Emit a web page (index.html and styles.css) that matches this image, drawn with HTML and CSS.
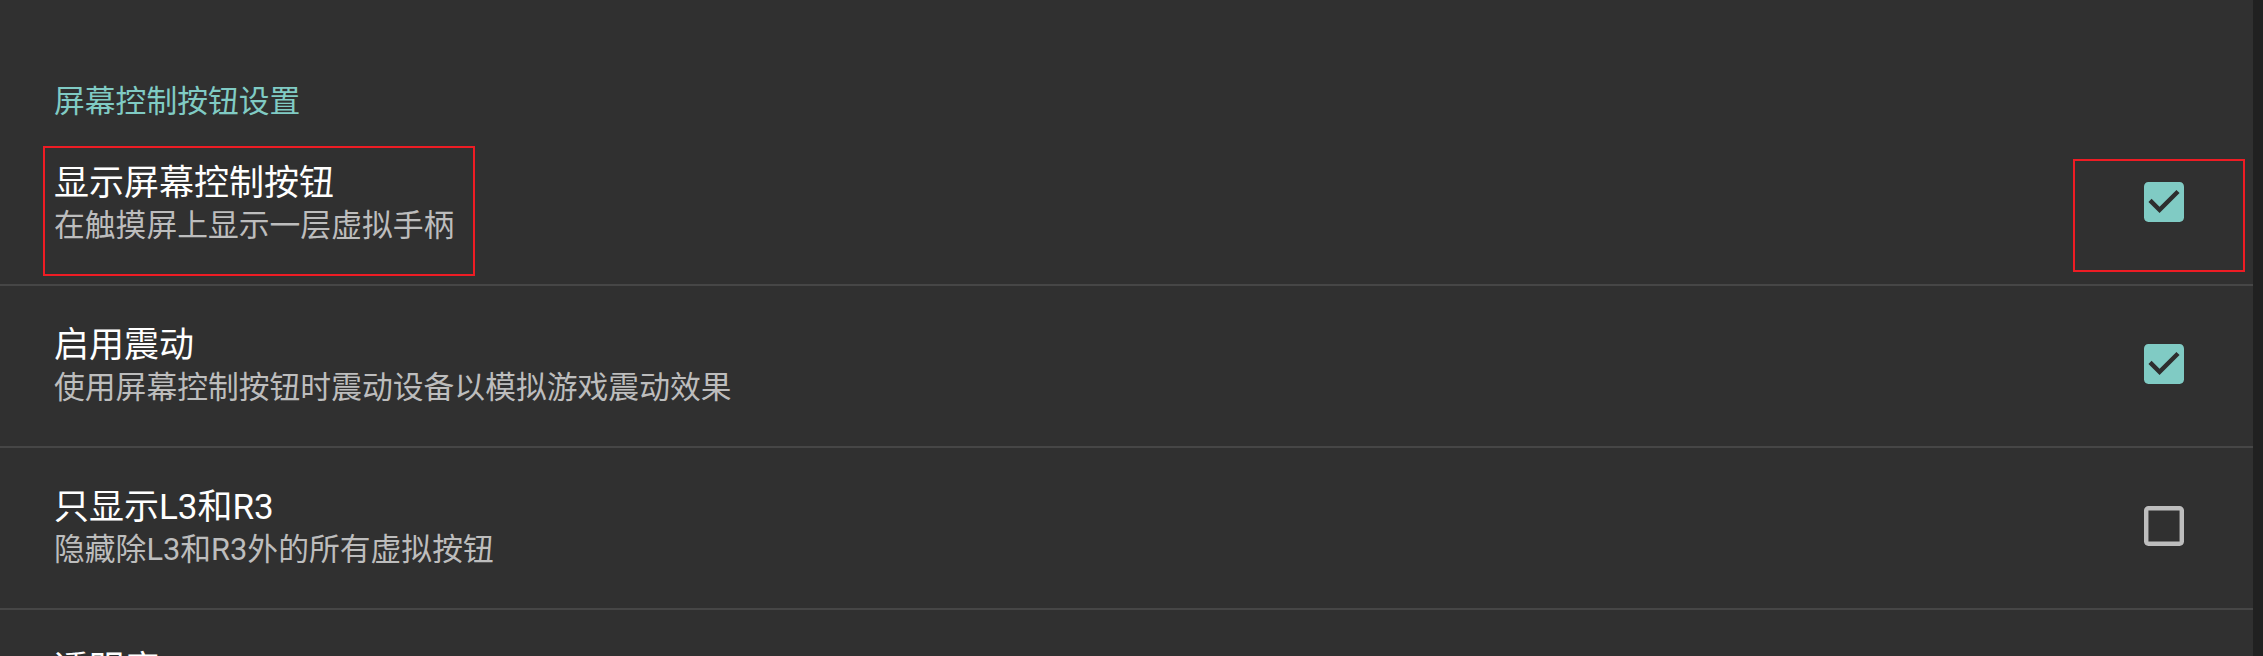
FILE: index.html
```html
<!DOCTYPE html>
<html lang="zh-CN">
<head>
<meta charset="utf-8">
<title>屏幕控制按钮设置</title>
<link rel="stylesheet" href="styles.css">
</head>
<body>
<div class="screen">
  <main class="prefs">
    <div class="category">屏幕控制按钮设置</div>

    <div class="row">
      <div class="texts">
        <div class="title">显示屏幕控制按钮</div>
        <div class="summary">在触摸屏上显示一层虚拟手柄</div>
      </div>
      <svg class="check" viewBox="3 3 18 18" aria-hidden="true">
        <path class="box-on" d="M19 3H5c-1.11 0-2 .9-2 2v14c0 1.1.89 2 2 2h14c1.11 0 2-.9 2-2V5c0-1.1-.89-2-2-2z"/>
        <path class="mark" d="M10 17l-5-5 1.41-1.41L10 14.17l7.59-7.59L19 8l-9 9z"/>
      </svg>
      <div class="mark-box mark-text"></div>
      <div class="mark-box mark-check"></div>
    </div>

    <div class="row">
      <div class="texts">
        <div class="title">启用震动</div>
        <div class="summary">使用屏幕控制按钮时震动设备以模拟游戏震动效果</div>
      </div>
      <svg class="check" viewBox="3 3 18 18" aria-hidden="true">
        <path class="box-on" d="M19 3H5c-1.11 0-2 .9-2 2v14c0 1.1.89 2 2 2h14c1.11 0 2-.9 2-2V5c0-1.1-.89-2-2-2z"/>
        <path class="mark" d="M10 17l-5-5 1.41-1.41L10 14.17l7.59-7.59L19 8l-9 9z"/>
      </svg>
    </div>

    <div class="row">
      <div class="texts">
        <div class="title">只显示L3和R3</div>
        <div class="summary">隐藏除L3和R3外的所有虚拟按钮</div>
      </div>
      <svg class="check" viewBox="3 3 18 18" aria-hidden="true">
        <path class="box-off" d="M19 5v14H5V5h14m0-2H5c-1.1 0-2 .9-2 2v14c0 1.1.9 2 2 2h14c1.1 0 2-.9 2-2V5c0-1.1-.9-2-2-2z"/>
      </svg>
    </div>

    <div class="row">
      <div class="texts">
        <div class="title">透明度</div>
        <div class="summary">调整屏幕控制按钮的透明度</div>
      </div>
    </div>
  </main>
  <div class="edge"></div>
</div>
</body>
</html>
```

FILE: styles.css
```css
html, body {
  margin: 0;
  padding: 0;
  height: 656px;
  overflow: hidden;
  background: #303030;
}

.screen {
  display: flex;
  height: 656px;
  font-family: Roboto, "Noto Sans CJK SC", sans-serif;
}

.prefs {
  flex: 1;
  display: flex;
  flex-direction: column;
  overflow: hidden;
  background: #303030;
}

.edge {
  width: 10px;
  background: #212121;
}

.category {
  padding: 82px 0 2px 54px;
  font-size: 30.8px;
  line-height: 40px;
  color: #80cbc4;
  flex: none;
}

.row {
  position: relative;
  flex: none;
  height: 160px;
  display: flex;
  align-items: center;
  padding: 0 69px 0 54px;
  border-bottom: 2px solid #464646;
}

.texts {
  flex: 1;
  display: flex;
  flex-direction: column;
}

.title {
  font-size: 35px;
  line-height: 44px;
  color: #ffffff;
}

.summary {
  font-size: 30.8px;
  line-height: 40px;
  color: #bdbdbd;
}

.check {
  width: 40px;
  height: 40px;
  flex: none;
  margin-bottom: 4px;
}

.box-on {
  fill: #80cbc4;
}

.mark {
  fill: #2e2e2e;
}

.box-off {
  fill: #bdbdbd;
}

/* red annotation rectangles drawn over the screenshot */
.mark-box {
  position: absolute;
  border: 2px solid #ee1c24;
  box-sizing: border-box;
}

.mark-text {
  left: 43px;
  top: 22px;
  width: 432px;
  height: 130px;
}

.mark-check {
  left: 2073px;
  top: 35px;
  width: 172px;
  height: 113px;
}
```
